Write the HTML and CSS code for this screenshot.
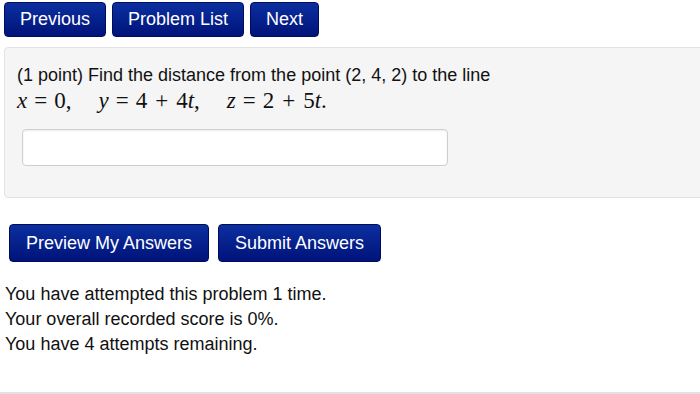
FILE: index.html
```html
<!DOCTYPE html>
<html>
<head>
<meta charset="utf-8">
<link rel="stylesheet" href="styles.css">
</head>
<body>
<div class="page">
  <nav class="nav">
    <a class="btn nav-btn">Previous</a>
    <a class="btn nav-btn">Problem List</a>
    <a class="btn nav-btn">Next</a>
  </nav>
  <div class="problem">
    <p class="prompt">(1 point) Find the distance from the point (2, 4, 2) to the line</p>
    <p class="math"><span class="eq"><i>x</i><span class="rel">=</span>0,</span><span class="eq"><i>y</i><span class="rel">=</span>4<span class="bin">+</span>4<i>t</i>,</span><span class="eq"><i>z</i><span class="rel">=</span>2<span class="bin">+</span>5<i>t</i>.</span></p>
    <div class="answer"><input class="answer-input" type="text"></div>
  </div>
  <div class="actions">
    <button class="btn act-btn">Preview My Answers</button>
    <button class="btn act-btn">Submit Answers</button>
  </div>
  <div class="status">
    <p>You have attempted this problem 1 time.</p>
    <p>Your overall recorded score is 0%.</p>
    <p>You have 4 attempts remaining.</p>
  </div>
  <div class="rule"></div>
</div>
</body>
</html>
```
FILE: styles.css
```css
html, body {
  margin: 0;
  padding: 0;
  background: #ffffff;
}
body {
  font-family: "Liberation Sans", Arial, sans-serif;
  color: #111;
  width: 700px;
  height: 394px;
  overflow: hidden;
}
.page {
  display: flex;
  flex-direction: column;
  height: 394px;
}
.btn {
  display: inline-flex;
  align-items: center;
  justify-content: center;
  box-sizing: border-box;
  color: #fff;
  font-family: "Liberation Sans", Arial, sans-serif;
  font-size: 18px;
  background: linear-gradient(#0b2f9f, #00137a);
  border: 1px solid #000c5a;
  border-radius: 4px;
  text-decoration: none;
  padding: 0 15px;
}
.nav {
  display: flex;
  gap: 6px;
  padding: 2px 0 0 4px;
}
.nav-btn {
  height: 35px;
}
.problem {
  margin: 10px -10px 0 4px;
  height: 151px;
  box-sizing: border-box;
  background: #f5f5f5;
  border: 1px solid #e2e2e2;
  border-radius: 4px;
  padding: 16px 0 0 12px;
}
.prompt {
  margin: 0;
  font-size: 18px;
  line-height: 22px;
}
.math {
  margin: 1px 0 0 0;
  font-family: "Liberation Serif", "Times New Roman", serif;
  font-size: 23px;
  line-height: 27px;
  display: flex;
  gap: 27px;
}
.math i {
  font-style: italic;
}
.rel {
  margin: 0 7px;
}
.bin {
  margin: 0 8px;
}
.answer {
  margin: 15px 0 0 5px;
}
.answer-input {
  display: block;
  width: 426px;
  height: 37px;
  box-sizing: border-box;
  border: 1px solid #cfcfcf;
  border-radius: 4px;
  background: #fff;
  box-shadow: inset 0 1px 2px rgba(0,0,0,0.08);
  outline: none;
}
.actions {
  display: flex;
  gap: 9px;
  padding: 26px 0 0 9px;
}
.act-btn {
  height: 38px;
  padding: 0 16px;
}
.status {
  padding: 20px 0 0 5px;
  font-size: 18px;
  line-height: 25px;
}
.status p {
  margin: 0;
}
.rule {
  margin-top: auto;
  height: 2px;
  background: #e2e2e2;
}
```
